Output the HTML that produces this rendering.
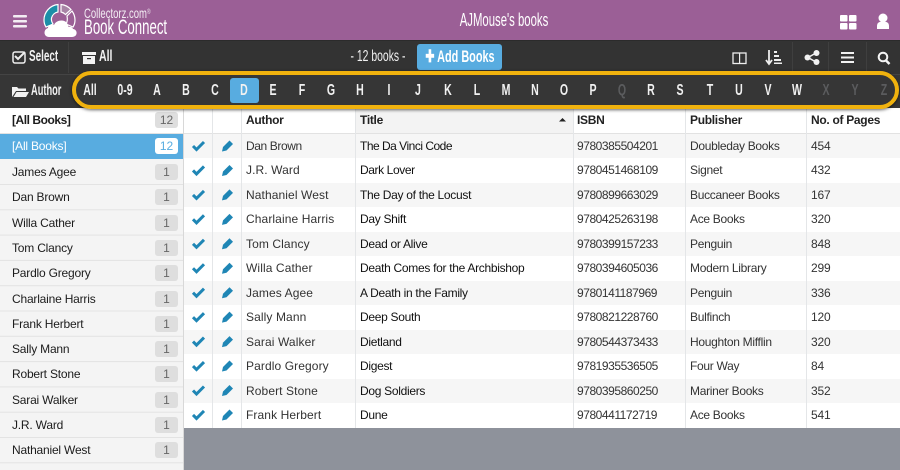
<!DOCTYPE html>
<html><head><meta charset="utf-8"><style>
html,body{margin:0;padding:0;width:900px;height:470px;overflow:hidden;background:#fff;font-family:"Liberation Sans",sans-serif}
#p{position:relative;width:900px;height:470px;overflow:hidden}
.a,.c,.l,.s,.r,.n,.b{position:absolute;white-space:nowrap}
.c{transform:translateX(-50%) scaleX(.66);color:#f1f1f1;font-size:16px;line-height:16px;font-weight:bold}
.l{transform:scaleX(.66);transform-origin:0 50%;color:#f1f1f1;font-size:16px;line-height:16px;font-weight:bold}
.dim{color:#5b5c5e}
.s{left:12px;font-size:12px;line-height:16px;color:#1c1c1c;letter-spacing:-.2px}
.n{left:155px;width:23px;height:16px;background:#dedede;border-radius:3px;text-align:center;font-size:12px;line-height:16px;color:#666}
.td{position:absolute;font-size:12px;line-height:16px;color:#333;white-space:nowrap;letter-spacing:.1px}
.v{position:absolute;top:108px;height:320px;width:1px;background:#e4e6e8}
.th{position:absolute;top:112px;font-size:12px;line-height:16px;font-weight:bold;color:#222;letter-spacing:-.3px}
.ti{color:#111;letter-spacing:-.3px}
.is{letter-spacing:-.45px}
.pu{letter-spacing:-.3px}
.pg{letter-spacing:-.2px}
</style></head><body><div id="p">
<div class="a" style="left:0;top:0;width:900px;height:40px;background:#9b5f96"></div>
<div class="a" style="left:0;top:40px;width:900px;height:34px;background:#333;border-top:1px solid #2b2b2b;box-sizing:border-box"></div>
<div class="a" style="left:0;top:74px;width:900px;height:34px;background:#363636;border-top:1px solid #444;box-sizing:border-box"></div>

<svg class="a" style="left:0;top:0" width="900" height="108">
<g fill="#f3edf3"><rect x="13" y="15" width="14" height="2.500" rx="1"/><rect x="13" y="20" width="14" height="2.500" rx="1"/><rect x="13" y="25" width="14" height="2.500" rx="1"/></g>
<path d="M58 4.500A15.500 15.500 0 0 0 44 20Q44 24 46 27L53 24Q51 21 51.500 18A8 8 0 0 1 58 12Z" fill="#1c8ea8" stroke="#fff" stroke-width="1.200"/>
<path d="M61 4.500A15.500 15.500 0 0 1 71 9.500L65.500 14.500Q63.500 12.500 61 12Z" fill="#a884a6" stroke="#fff" stroke-width="1.200"/>
<path d="M72 11A15.500 15.500 0 0 1 75 20Q75 24 73 27L66 24Q68 21 67 16Z" fill="#9b5f96" stroke="#fff" stroke-width="1.200"/>
<path d="M49 37C43.500 37 43 29.500 48 28C48 25 52 24 54 25C56 20 64 19 67 23C68 25 68.500 26 68.500 27C71 26 73 28 73 29C78 29.500 78 37 72 37Z" fill="#fff"/>
<g fill="#fff"><rect x="840" y="15" width="7.500" height="6.500" rx="1"/><rect x="849" y="15" width="7.500" height="6.500" rx="1"/><rect x="840" y="23" width="7.500" height="6.500" rx="1"/><rect x="849" y="23" width="7.500" height="6.500" rx="1"/>
<circle cx="883" cy="18" r="4.500"/><path d="M877 29v-3c0-3 2-4 3-4h6c1 0 3 1 3 4v3z"/></g>
<rect x="13" y="52" width="12" height="11" rx="2" fill="none" stroke="#eee" stroke-width="1.500"/>
<path d="M15 56l3 3 7-7" fill="none" stroke="#eee" stroke-width="2"/>
<path d="M82 52h14v3H82zM83 56h12v8H83z" fill="#f3f3f3"/><rect x="87" y="58" width="4" height="1.200" fill="#333"/>
<rect x="733" y="53" width="13" height="10.500" fill="none" stroke="#eee" stroke-width="1.300"/><rect x="739" y="53" width="1.200" height="10" fill="#eee"/>
<path d="M769 50v13M766 60l3 4 3-4" fill="none" stroke="#eee" stroke-width="1.800"/>
<path d="M774 51h3v2h-3zM774 55h5v2h-5zM774 59h7v2h-7zM774 62.500h8v1.500h-8z" fill="#eee"/>
<g fill="#f2f2f2"><circle cx="816.500" cy="53" r="3"/><circle cx="816.500" cy="62" r="3"/><circle cx="807.500" cy="57.500" r="3"/></g>
<path d="M816 53l-8 4.500 8 4.500" fill="none" stroke="#f2f2f2" stroke-width="1.500"/>
<g fill="#f2f2f2"><rect x="841" y="52" width="13" height="2"/><rect x="841" y="56.500" width="13" height="2"/><rect x="841" y="61" width="13" height="2"/></g>
<circle cx="883" cy="57" r="4.300" fill="none" stroke="#f5f5f5" stroke-width="2"/><path d="M886 60.500l3.500 3.500" stroke="#f5f5f5" stroke-width="2.500"/>
<path d="M12 97V87h5l1.500 1.500H26V91H16l-4 6zM13.500 97l3-5h12.500l-3 5z" fill="#f1f1f1"/>
<g stroke="#3f3f3f"><path d="M68.500 42v31M792.500 42v31M828.500 42v31M866.500 42v31"/></g>
</svg>

<div class="l" style="left:84px;top:5px;font-size:14px;font-weight:normal;color:#f3edf3;transform:scaleX(.68)">Collectorz.com<span style="font-size:7px;vertical-align:4px">®</span></div>
<div class="l" style="left:84px;top:17px;font-size:21px;line-height:22px;font-weight:normal;color:#fff;transform:scaleX(.63)">Book Connect</div>
<div class="c" style="left:503.500px;top:11px;font-size:18px;line-height:18px;font-weight:normal;color:#fff;transform:translateX(-50%) scaleX(.63)">AJMouse's books</div>

<div class="l" style="left:29px;top:49px;transform:scaleX(.62)">Select</div>
<div class="l" style="left:99px;top:49px">All</div>
<div class="c" style="left:378px;top:49px;font-weight:normal;transform:translateX(-50%) scaleX(.65)">- 12 books -</div>
<div class="a" style="left:417px;top:44px;width:85px;height:26px;background:#58ace0;border-radius:3px"></div>
<div class="c" style="left:459.500px;top:49px;font-size:17px;color:#fff;transform:translateX(-50%) scaleX(.64)">✚ Add Books</div>
<div class="l" style="left:31px;top:83px;transform:scaleX(.58)">Author</div>

<div class="a" style="left:230px;top:78px;width:29px;height:25px;background:#58ace0;border-radius:3px"></div>
<div class="c" style="left:90px;top:83px">All</div><div class="c" style="left:125px;top:83px">0-9</div><div class="c" style="left:157px;top:83px">A</div><div class="c" style="left:186px;top:83px">B</div><div class="c" style="left:215px;top:83px">C</div><div class="c" style="left:244px;top:83px">D</div><div class="c" style="left:273px;top:83px">E</div><div class="c" style="left:302px;top:83px">F</div><div class="c" style="left:331px;top:83px">G</div><div class="c" style="left:360px;top:83px">H</div><div class="c" style="left:389px;top:83px">I</div><div class="c" style="left:418px;top:83px">J</div><div class="c" style="left:448px;top:83px">K</div><div class="c" style="left:477px;top:83px">L</div><div class="c" style="left:506px;top:83px">M</div><div class="c" style="left:535px;top:83px">N</div><div class="c" style="left:564px;top:83px">O</div><div class="c" style="left:593px;top:83px">P</div><div class="c dim" style="left:622px;top:83px">Q</div><div class="c" style="left:651px;top:83px">R</div><div class="c" style="left:680px;top:83px">S</div><div class="c" style="left:710px;top:83px">T</div><div class="c" style="left:739px;top:83px">U</div><div class="c" style="left:768px;top:83px">V</div><div class="c" style="left:797px;top:83px">W</div><div class="c dim" style="left:826px;top:83px">X</div><div class="c dim" style="left:855px;top:83px">Y</div><div class="c dim" style="left:884px;top:83px">Z</div>

<div class="a" style="left:0;top:108px;width:184px;height:362px;background:#f4f4f4"></div>
<div class="a" style="left:0;top:108px;width:184px;height:26px;background:#fff;border-bottom:1px solid #e2e2e2;box-sizing:border-box"></div>
<div class="a" style="left:0;top:134px;width:183px;height:25px;background:#58ace0"></div>
<div class="a" style="left:0;top:184px;width:183px;height:1px;background:#e3e3e3;box-shadow:0 25.300px #e3e3e3,0 50.600px #e3e3e3,0 75.900px #e3e3e3,0 101.200px #e3e3e3,0 126.500px #e3e3e3,0 151.800px #e3e3e3,0 177.100px #e3e3e3,0 202.400px #e3e3e3,0 227.700px #e3e3e3,0 253px #e3e3e3,0 278.300px #e3e3e3"></div>
<div class="s" style="top:112px;font-weight:bold;letter-spacing:-.45px">[All Books]</div><div class="n" style="top:112px">12</div>
<div class="s" style="top:138px;color:#fff">[All Books]</div><div class="n" style="top:138px;background:#fff;color:#58ace0">12</div>
<div class="s" style="top:164px">James Agee</div><div class="n" style="top:164px">1</div>
<div class="s" style="top:189px">Dan Brown</div><div class="n" style="top:189px">1</div>
<div class="s" style="top:214.500px">Willa Cather</div><div class="n" style="top:214.500px">1</div>
<div class="s" style="top:240px">Tom Clancy</div><div class="n" style="top:240px">1</div>
<div class="s" style="top:265px">Pardlo Gregory</div><div class="n" style="top:265px">1</div>
<div class="s" style="top:290.500px">Charlaine Harris</div><div class="n" style="top:290.500px">1</div>
<div class="s" style="top:316px">Frank Herbert</div><div class="n" style="top:316px">1</div>
<div class="s" style="top:341px">Sally Mann</div><div class="n" style="top:341px">1</div>
<div class="s" style="top:366px">Robert Stone</div><div class="n" style="top:366px">1</div>
<div class="s" style="top:391.500px">Sarai Walker</div><div class="n" style="top:391.500px">1</div>
<div class="s" style="top:417px">J.R. Ward</div><div class="n" style="top:417px">1</div>
<div class="s" style="top:442px">Nathaniel West</div><div class="n" style="top:442px">1</div>

<div class="a" style="left:183px;top:108px;width:1px;height:362px;background:#d8d8d8"></div>
<div class="a" style="left:184px;top:428px;width:716px;height:42px;background:#8e929b"></div>
<div class="a" style="left:356px;top:108px;width:217px;height:25px;background:#f3f3f3"></div>
<div class="a" style="left:184px;top:133px;width:716px;height:1px;background:#e2e2e2"></div>
<div class="a" style="left:184px;top:134px;width:716px;height:24.450px;background:#f6f6f6"></div>
<div class="a" style="left:184px;top:182.900px;width:716px;height:24.450px;background:#f6f6f6"></div>
<div class="a" style="left:184px;top:231.800px;width:716px;height:24.450px;background:#f6f6f6"></div>
<div class="a" style="left:184px;top:280.700px;width:716px;height:24.450px;background:#f6f6f6"></div>
<div class="a" style="left:184px;top:329.600px;width:716px;height:24.450px;background:#f6f6f6"></div>
<div class="a" style="left:184px;top:378.500px;width:716px;height:24.450px;background:#f6f6f6"></div>
<div class="v" style="left:212px"></div><div class="v" style="left:241px"></div><div class="v" style="left:355px"></div><div class="v" style="left:573px"></div><div class="v" style="left:685px"></div><div class="v" style="left:806px"></div>
<div class="th" style="left:246px">Author</div><div class="th" style="left:360px">Title</div><div class="th" style="left:577px">ISBN</div><div class="th" style="left:690px">Publisher</div><div class="th" style="left:811px">No. of Pages</div>
<svg class="a" style="left:184px;top:108px" width="60" height="320">
<defs><g id="k"><path d="M9 38l3.500 3.500 7.500-7.500" fill="none" stroke="#1f86b5" stroke-width="3"/><path d="M38 43.500l1-4.500 6.500-6.500 3.500 3.500-6.500 6.500z" fill="#1f86b5"/></g></defs>
<use href="#k"/><use href="#k" y="24.450"/><use href="#k" y="48.900"/><use href="#k" y="73.350"/><use href="#k" y="97.800"/><use href="#k" y="122.250"/><use href="#k" y="146.700"/><use href="#k" y="171.150"/><use href="#k" y="195.600"/><use href="#k" y="220.050"/><use href="#k" y="244.500"/><use href="#k" y="268.950"/>
</svg>
<svg class="a" style="left:558px;top:117px" width="10" height="6"><path d="M1 4.500h7L4.500 1z" fill="#222"/></svg>

<div class="td" style="left:246px;top:138px;letter-spacing:-.4px">Dan Brown</div><div class="td ti" style="left:360px;top:138px;letter-spacing:-.5px">The Da Vinci Code</div><div class="td is" style="left:577px;top:138px">9780385504201</div><div class="td pu" style="left:690px;top:138px">Doubleday Books</div><div class="td pg" style="left:811px;top:138px">454</div>
<div class="td" style="left:246px;top:162.400px">J.R. Ward</div><div class="td ti" style="left:360px;top:162.400px;letter-spacing:-.4px">Dark Lover</div><div class="td is" style="left:577px;top:162.400px">9780451468109</div><div class="td pu" style="left:690px;top:162.400px">Signet</div><div class="td pg" style="left:811px;top:162.400px">432</div>
<div class="td" style="left:246px;top:186.900px">Nathaniel West</div><div class="td ti" style="left:360px;top:186.900px">The Day of the Locust</div><div class="td is" style="left:577px;top:186.900px">9780899663029</div><div class="td pu" style="left:690px;top:186.900px">Buccaneer Books</div><div class="td pg" style="left:811px;top:186.900px">167</div>
<div class="td" style="left:246px;top:211.300px">Charlaine Harris</div><div class="td ti" style="left:360px;top:211.300px">Day Shift</div><div class="td is" style="left:577px;top:211.300px">9780425263198</div><div class="td pu" style="left:690px;top:211.300px">Ace Books</div><div class="td pg" style="left:811px;top:211.300px">320</div>
<div class="td" style="left:246px;top:235.800px">Tom Clancy</div><div class="td ti" style="left:360px;top:235.800px">Dead or Alive</div><div class="td is" style="left:577px;top:235.800px">9780399157233</div><div class="td pu" style="left:690px;top:235.800px">Penguin</div><div class="td pg" style="left:811px;top:235.800px">848</div>
<div class="td" style="left:246px;top:260.200px">Willa Cather</div><div class="td ti" style="left:360px;top:260.200px">Death Comes for the Archbishop</div><div class="td is" style="left:577px;top:260.200px">9780394605036</div><div class="td pu" style="left:690px;top:260.200px">Modern Library</div><div class="td pg" style="left:811px;top:260.200px">299</div>
<div class="td" style="left:246px;top:284.700px">James Agee</div><div class="td ti" style="left:360px;top:284.700px">A Death in the Family</div><div class="td is" style="left:577px;top:284.700px">9780141187969</div><div class="td pu" style="left:690px;top:284.700px">Penguin</div><div class="td pg" style="left:811px;top:284.700px">336</div>
<div class="td" style="left:246px;top:309.200px">Sally Mann</div><div class="td ti" style="left:360px;top:309.200px">Deep South</div><div class="td is" style="left:577px;top:309.200px">9780821228760</div><div class="td pu" style="left:690px;top:309.200px">Bulfinch</div><div class="td pg" style="left:811px;top:309.200px">120</div>
<div class="td" style="left:246px;top:333.600px">Sarai Walker</div><div class="td ti" style="left:360px;top:333.600px">Dietland</div><div class="td is" style="left:577px;top:333.600px">9780544373433</div><div class="td pu" style="left:690px;top:333.600px">Houghton Mifflin</div><div class="td pg" style="left:811px;top:333.600px">320</div>
<div class="td" style="left:246px;top:358.100px">Pardlo Gregory</div><div class="td ti" style="left:360px;top:358.100px">Digest</div><div class="td is" style="left:577px;top:358.100px">9781935536505</div><div class="td pu" style="left:690px;top:358.100px">Four Way</div><div class="td pg" style="left:811px;top:358.100px">84</div>
<div class="td" style="left:246px;top:382.500px">Robert Stone</div><div class="td ti" style="left:360px;top:382.500px">Dog Soldiers</div><div class="td is" style="left:577px;top:382.500px">9780395860250</div><div class="td pu" style="left:690px;top:382.500px">Mariner Books</div><div class="td pg" style="left:811px;top:382.500px">352</div>
<div class="td" style="left:246px;top:407px">Frank Herbert</div><div class="td ti" style="left:360px;top:407px">Dune</div><div class="td is" style="left:577px;top:407px">9780441172719</div><div class="td pu" style="left:690px;top:407px">Ace Books</div><div class="td pg" style="left:811px;top:407px">541</div>

<div class="a" style="left:72px;top:70.500px;width:827px;height:38px;box-sizing:border-box;border:4px solid #f0b20e;border-radius:19px;box-shadow:0 1px 3px rgba(0,0,0,.6)"></div>
</div></body></html>
